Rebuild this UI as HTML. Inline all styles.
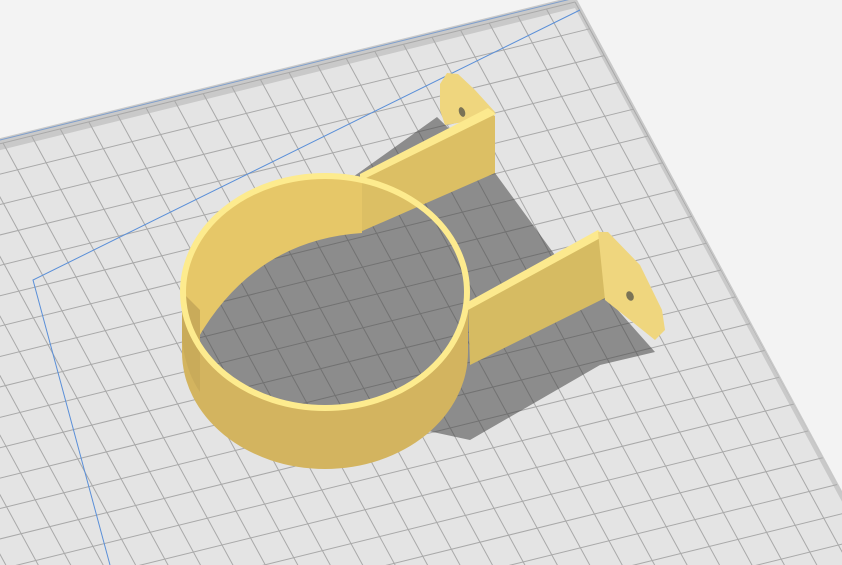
<!DOCTYPE html><html><head><style>html,body{margin:0;padding:0;width:842px;height:565px;overflow:hidden;background:#f3f3f3}</style></head><body>
<svg id="s" width="842" height="565" viewBox="0 0 842 565" xmlns="http://www.w3.org/2000/svg" style="display:block">
<defs>
<clipPath id="plate"><polygon points="575,0 -800,340 -100,1700 1300,1340"/></clipPath>
<clipPath id="sh"><polygon points="360,172 437,117 495,173 560,262 600,290 655,352 600,365 470,440 330,410 210,330 230,260"/><ellipse cx="325" cy="300" rx="138" ry="108"/></clipPath>
</defs>
<rect width="842" height="565" fill="#f3f3f3"/>
<polygon points="575,-4 -800,336 -100,1700 1300,1340" fill="#c9c9c9"/>
<polygon points="575,8 -800,348 -100,1700 1290,1330" fill="#e4e4e4"/>
<g id="grid" stroke="#a9a9a9" stroke-width="1" clip-path="url(#plate)"></g>
<line x1="0" y1="140" x2="575" y2="-2" stroke="#7f9fcc" stroke-width="1"/>
<polyline points="580,10 33,280 110,565" fill="none" stroke="#5a8fd8" stroke-width="1"/>
<g clip-path="url(#sh)"><rect width="842" height="565" fill="#8c8c8c"/><g id="grid2" stroke="#727272" stroke-width="1"></g></g>
<!-- upper arm -->
<polygon points="440,84 447,73 458,74 475,90 495,112 490,118 445,125 440,110" fill="#efd67e"/>
<ellipse cx="462" cy="112" rx="3" ry="5" fill="#7a7356" transform="rotate(-20 462 112)"/>
<polygon points="360,178 488,112 495,116 495,173 360,232" fill="#dcbf64"/>
<polygon points="360,174 488,108 496,114 360,181" fill="#fce98e"/>
<!-- ring -->
<path d="M184,300 A143,117 0 0 1 362,177 L362,233 Q255,240 198,338 Z" fill="#e6c768"/>
<path d="M182,292 A143,117 0 0 0 468,292 L468,352 A143,117 0 0 1 182,352 Z" fill="#d3b45f"/>
<path d="M182,292 L182,340 Q186,372 200,392 L200,310 Z" fill="#c9ab5a"/>
<ellipse cx="325" cy="292" rx="142" ry="116" fill="none" stroke="#fdeb8e" stroke-width="6"/>
<!-- lower arm -->
<polygon points="468,305 598,232 605,236 605,298 470,365" fill="#d6bb62"/>
<polygon points="466,303 598,230 604,236 468,310" fill="#fce98e"/>
<polygon points="598,232 608,232 640,265 662,310 665,330 655,340 605,300" fill="#efd67e"/>
<ellipse cx="630" cy="296" rx="3.5" ry="5" fill="#7a7356" transform="rotate(-25 630 296)"/>
</svg>
<script>
var B=[575,2],u=[-28.6,7.05],v=[14.6,26.8],h='';
for(var k=0;k<=45;k++){
 var p=[B[0]+k*v[0],B[1]+k*v[1]];h+='<line x1="'+p[0]+'" y1="'+p[1]+'" x2="'+(p[0]+60*u[0])+'" y2="'+(p[1]+60*u[1])+'"/>';
 var q=[B[0]+k*u[0],B[1]+k*u[1]];h+='<line x1="'+q[0]+'" y1="'+q[1]+'" x2="'+(q[0]+60*v[0])+'" y2="'+(q[1]+60*v[1])+'"/>';
}
document.getElementById('grid').innerHTML=h;document.getElementById('grid2').innerHTML=h;
</script>
</body></html>
